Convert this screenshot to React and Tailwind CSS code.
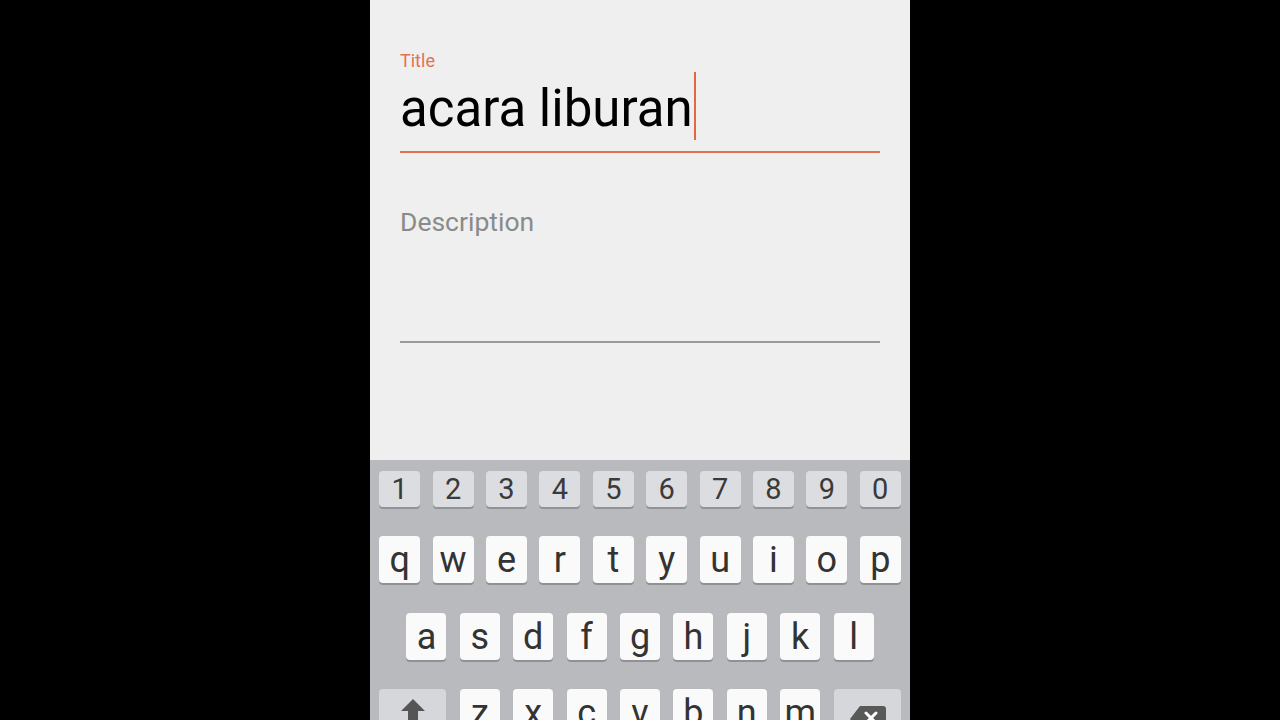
import React from 'react'

const font = { fontFamily: 'Roboto, "Noto Sans", sans-serif' }

const numbers = ['1', '2', '3', '4', '5', '6', '7', '8', '9', '0']
const row1 = ['q', 'w', 'e', 'r', 't', 'y', 'u', 'i', 'o', 'p']
const row2 = ['a', 's', 'd', 'f', 'g', 'h', 'j', 'k', 'l']
const row3 = ['z', 'x', 'c', 'v', 'b', 'n', 'm']

function Key({ label, wide, dim, children, className = '' }) {
  return (
    <div
      className={`flex h-[47px] shrink-0 items-center justify-center rounded-[4px] text-[36px] leading-none text-[#333333] shadow-[0_2px_0_#8f9195] ${
        wide ? 'w-[67px]' : 'w-[40px]'
      } ${dim ? 'bg-[#d6d7da]' : 'bg-[#fafafa]'} ${className}`}
    >
      {children || <span className="mt-[1px]">{label}</span>}
    </div>
  )
}

function ShiftIcon() {
  return (
    <svg width="26" height="24" viewBox="0 0 26 24" className="mt-[10px]">
      <path d="M13 0 L25 12 L18 12 L18 24 L8 24 L8 12 L1 12 Z" fill="#555555" />
    </svg>
  )
}

function BackspaceIcon() {
  return (
    <svg width="36" height="26" viewBox="0 0 36 26" className="mt-[17px] ml-[2px]">
      <path d="M10 0 H33 a3 3 0 0 1 3 3 V23 a3 3 0 0 1 -3 3 H10 L0 13 Z" fill="#595959" />
      <path d="M16 7 L26 17 M26 7 L16 17" stroke="#ffffff" strokeWidth="3" strokeLinecap="round" />
    </svg>
  )
}

export default function App() {
  return (
    <div className="flex h-[720px] w-[1280px] justify-center overflow-hidden bg-black" style={font}>
      <div className="flex w-[540px] flex-col bg-[#efefef]">
        {/* form */}
        <div className="h-[460px] shrink-0 px-[30px] pt-[50px]">
          <div className="text-[18px] leading-[21px] text-[#e4714f]">Title</div>
          <div className="mt-[1px] flex h-[68px] items-center">
            <span className="mt-[6px] text-[51px] leading-[60px] text-black">acara liburan</span>
            <span className="ml-[1px] h-[68px] w-[2px] bg-[#e4683f]" />
          </div>
          <div className="mt-[11px] h-[2px] bg-[#e2714d]" />
          <div className="mt-[54px] text-[26.5px] leading-[30px] text-[#8a8a8a]">Description</div>
          <div className="mt-[104px] h-[2px] bg-[#9a9a9a]" />
        </div>

        {/* keyboard */}
        <div className="flex flex-1 flex-col bg-[#b8babe] pt-[11px]">
          <div className="flex justify-center gap-[12.4px]">
            {numbers.map((n) => (
              <div
                key={n}
                className="flex h-[36px] w-[41px] items-center justify-center rounded-[4px] bg-[#dcdde0] text-[29px] leading-none text-[#3a3a3a] shadow-[0_2px_0_#909296]"
              >
                {n}
              </div>
            ))}
          </div>
          <div className="mt-[29px] flex justify-center gap-[12.4px]">
            {row1.map((k) => (
              <Key key={k} label={k} className="w-[41px]" />
            ))}
          </div>
          <div className="mt-[30px] flex justify-center gap-[13.4px]">
            {row2.map((k) => (
              <Key key={k} label={k} />
            ))}
          </div>
          <div className="mt-[29px] flex justify-center gap-[13.4px]">
            <Key wide dim className="items-start">
              <ShiftIcon />
            </Key>
            {row3.map((k) => (
              <Key key={k} label={k} />
            ))}
            <Key wide dim className="items-start">
              <BackspaceIcon />
            </Key>
          </div>
        </div>
      </div>
    </div>
  )
}
